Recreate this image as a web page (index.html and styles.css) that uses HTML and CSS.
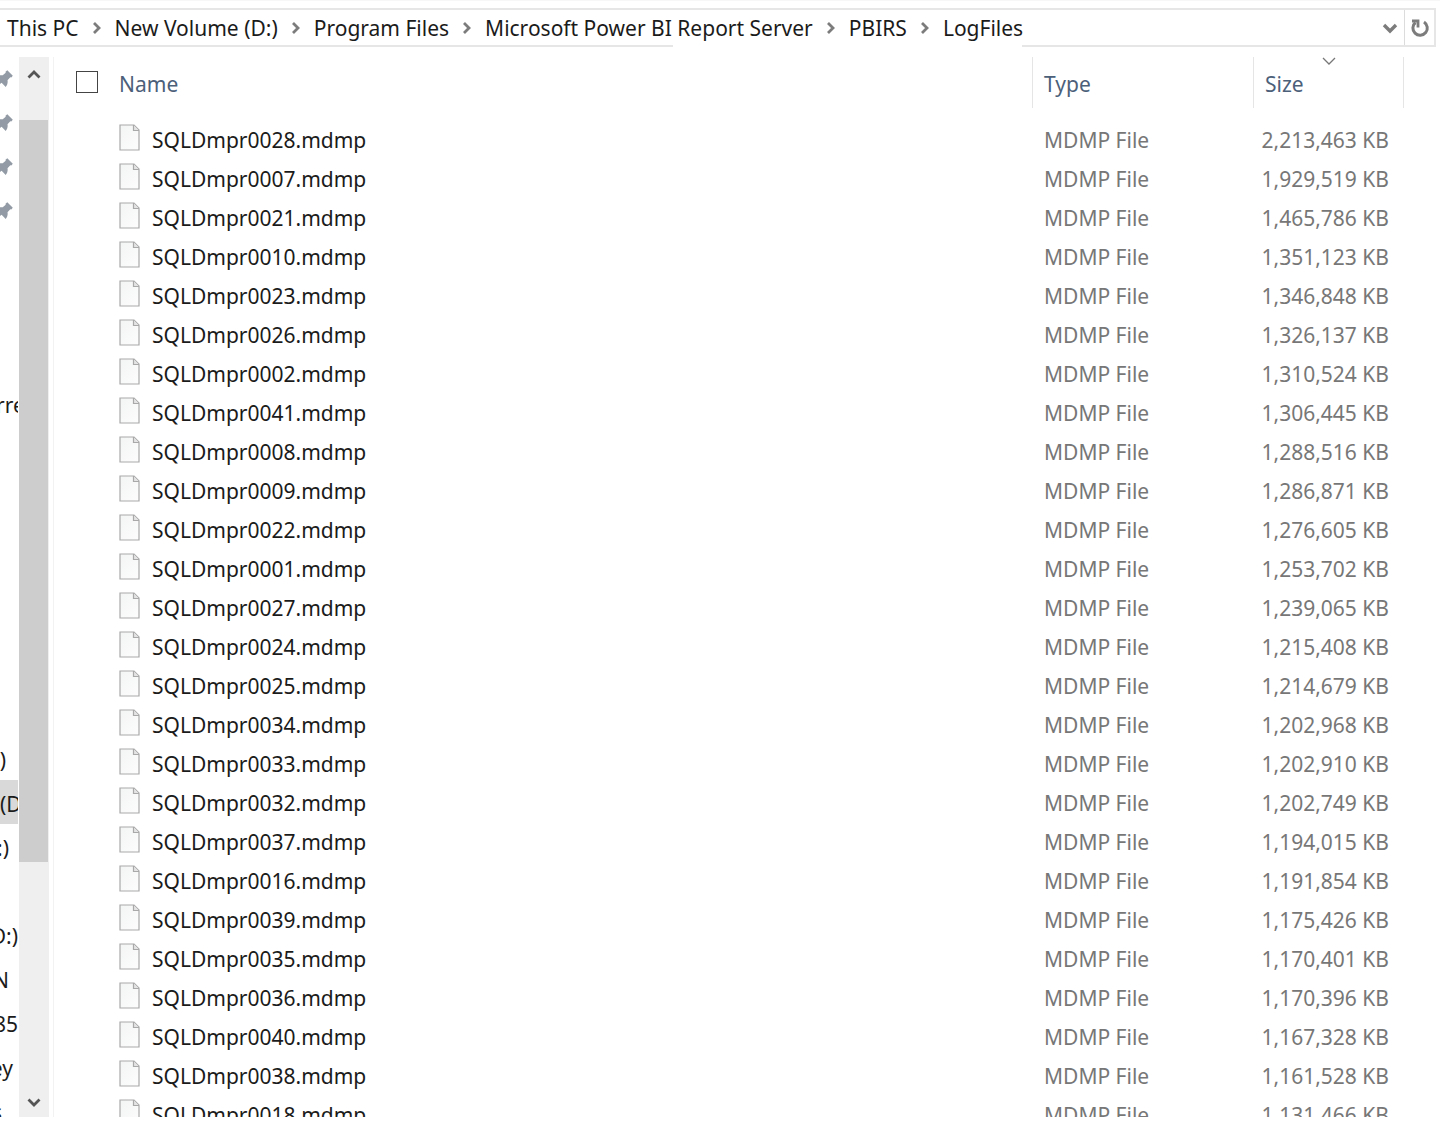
FILE: index.html
```html
<!DOCTYPE html>
<html lang="en">
<head>
  <meta charset="UTF-8">
  <title>LogFiles</title>
  <link rel="stylesheet" href="styles.css">
</head>
<body>

  <!-- shared icons -->
  <svg class="icons" width="0" height="0">
    <defs>
      <linearGradient id="paper" x1="0" y1="0" x2="1" y2="1">
        <stop offset="0" stop-color="#f3f4f4"/>
        <stop offset="1" stop-color="#fdfdfd"/>
      </linearGradient>
    </defs>
    <symbol id="file" viewBox="0 0 21 27">
      <path d="M1 1H15L20 6V26H1Z" fill="url(#paper)" stroke="#a9a9a9" stroke-width="1.2"/>
      <path d="M14.5 1V6.5H20" fill="#e4e4e4" stroke="#a9a9a9" stroke-width="1.2"/>
    </symbol>
    <symbol id="pin" viewBox="0 0 18 18">
      <path d="M12.3 .3L17.8 5.8L16.3 7.6L15.3 7.3L12.5 10.3C13 12.500 12.400 15 10.700 17L6.600 12.700L1.500 16.700L1 16.200L5 11L1 7C3 5.300 5.400 4.900 7.700 5.300L10.700 2.800L10.500 1.800Z" fill="#929ba5"/>
    </symbol>
    <symbol id="next" viewBox="0 0 10 12">
      <path d="M2 1L7 6L2 11" fill="none" stroke="#7c7c7c" stroke-width="2.8"/>
    </symbol>
  </svg>

  <div class="address-bar">
    <nav class="crumbs">
      <a href="#">This PC</a>
      <svg class="next"><use href="#next"/></svg>
      <a href="#">New Volume (D:)</a>
      <svg class="next"><use href="#next"/></svg>
      <a href="#">Program Files</a>
      <svg class="next"><use href="#next"/></svg>
      <a href="#">Microsoft Power BI Report Server</a>
      <svg class="next"><use href="#next"/></svg>
      <a href="#">PBIRS</a>
      <svg class="next"><use href="#next"/></svg>
      <a href="#">LogFiles</a>
    </nav>
    <button class="history" aria-label="Previous locations">
      <svg width="16" height="12" viewBox="0 0 16 12"><path d="M2 3L8 9L14 3" fill="none" stroke="#7c7c7c" stroke-width="3.4"/></svg>
    </button>
    <button class="refresh" aria-label="Refresh">
      <svg width="20" height="20" viewBox="0 0 20 20">
        <path d="M14 4A7.200 7.200 0 1 1 5.500 4.500" fill="none" stroke="#7c7c7c" stroke-width="3"/>
        <path d="M2 3H8V9.500" fill="none" stroke="#7c7c7c" stroke-width="2.8"/>
      </svg>
    </button>
  </div>

  <div class="explorer">
    <aside class="sidebar">
      <ul class="pinned">
        <li><svg class="pin"><use href="#pin"/></svg></li>
        <li><svg class="pin"><use href="#pin"/></svg></li>
        <li><svg class="pin"><use href="#pin"/></svg></li>
        <li><svg class="pin"><use href="#pin"/></svg></li>
      </ul>
      <ul class="folders">
        <li>rre</li>
      </ul>
      <ul class="drives">
        <li class="short">)</li>
        <li class="selected">(D</li>
        <li class="mid">:)</li>
      </ul>
      <ul class="network">
        <li>D:)</li>
        <li class="mid">N</li>
        <li>85</li>
        <li class="near">ey</li>
        <li class="edge">s</li>
      </ul>
    </aside>

    <div class="scrollbar">
      <button class="scroll-btn" aria-label="Scroll up">
        <svg width="14" height="12" viewBox="0 0 14 12"><path d="M1.5 9.5L7 4L12.5 9.5" fill="none" stroke="#555" stroke-width="2.8"/></svg>
      </button>
      <div class="track"><div class="thumb"></div></div>
      <button class="scroll-btn down" aria-label="Scroll down">
        <svg width="14" height="12" viewBox="0 0 14 12"><path d="M1.5 2.5L7 8L12.5 2.5" fill="none" stroke="#555" stroke-width="2.8"/></svg>
      </button>
    </div>

    <main class="files">
      <table>
        <thead>
          <tr>
            <th class="name"><div class="head"><input type="checkbox" aria-label="Select all">Name</div></th>
            <th class="type"><div class="head">Type</div></th>
            <th class="size"><div class="head">Size
              <svg class="sort" width="14" height="8" viewBox="0 0 14 8"><path d="M1 1L7 7L13 1" fill="none" stroke="#777" stroke-width="1.3"/></svg>
            </div></th>
          </tr>
        </thead>
        <tbody>
          <tr><td><svg class="file"><use href="#file"/></svg>SQLDmpr0028.mdmp</td><td>MDMP File</td><td>2,213,463 KB</td></tr>
          <tr><td><svg class="file"><use href="#file"/></svg>SQLDmpr0007.mdmp</td><td>MDMP File</td><td>1,929,519 KB</td></tr>
          <tr><td><svg class="file"><use href="#file"/></svg>SQLDmpr0021.mdmp</td><td>MDMP File</td><td>1,465,786 KB</td></tr>
          <tr><td><svg class="file"><use href="#file"/></svg>SQLDmpr0010.mdmp</td><td>MDMP File</td><td>1,351,123 KB</td></tr>
          <tr><td><svg class="file"><use href="#file"/></svg>SQLDmpr0023.mdmp</td><td>MDMP File</td><td>1,346,848 KB</td></tr>
          <tr><td><svg class="file"><use href="#file"/></svg>SQLDmpr0026.mdmp</td><td>MDMP File</td><td>1,326,137 KB</td></tr>
          <tr><td><svg class="file"><use href="#file"/></svg>SQLDmpr0002.mdmp</td><td>MDMP File</td><td>1,310,524 KB</td></tr>
          <tr><td><svg class="file"><use href="#file"/></svg>SQLDmpr0041.mdmp</td><td>MDMP File</td><td>1,306,445 KB</td></tr>
          <tr><td><svg class="file"><use href="#file"/></svg>SQLDmpr0008.mdmp</td><td>MDMP File</td><td>1,288,516 KB</td></tr>
          <tr><td><svg class="file"><use href="#file"/></svg>SQLDmpr0009.mdmp</td><td>MDMP File</td><td>1,286,871 KB</td></tr>
          <tr><td><svg class="file"><use href="#file"/></svg>SQLDmpr0022.mdmp</td><td>MDMP File</td><td>1,276,605 KB</td></tr>
          <tr><td><svg class="file"><use href="#file"/></svg>SQLDmpr0001.mdmp</td><td>MDMP File</td><td>1,253,702 KB</td></tr>
          <tr><td><svg class="file"><use href="#file"/></svg>SQLDmpr0027.mdmp</td><td>MDMP File</td><td>1,239,065 KB</td></tr>
          <tr><td><svg class="file"><use href="#file"/></svg>SQLDmpr0024.mdmp</td><td>MDMP File</td><td>1,215,408 KB</td></tr>
          <tr><td><svg class="file"><use href="#file"/></svg>SQLDmpr0025.mdmp</td><td>MDMP File</td><td>1,214,679 KB</td></tr>
          <tr><td><svg class="file"><use href="#file"/></svg>SQLDmpr0034.mdmp</td><td>MDMP File</td><td>1,202,968 KB</td></tr>
          <tr><td><svg class="file"><use href="#file"/></svg>SQLDmpr0033.mdmp</td><td>MDMP File</td><td>1,202,910 KB</td></tr>
          <tr><td><svg class="file"><use href="#file"/></svg>SQLDmpr0032.mdmp</td><td>MDMP File</td><td>1,202,749 KB</td></tr>
          <tr><td><svg class="file"><use href="#file"/></svg>SQLDmpr0037.mdmp</td><td>MDMP File</td><td>1,194,015 KB</td></tr>
          <tr><td><svg class="file"><use href="#file"/></svg>SQLDmpr0016.mdmp</td><td>MDMP File</td><td>1,191,854 KB</td></tr>
          <tr><td><svg class="file"><use href="#file"/></svg>SQLDmpr0039.mdmp</td><td>MDMP File</td><td>1,175,426 KB</td></tr>
          <tr><td><svg class="file"><use href="#file"/></svg>SQLDmpr0035.mdmp</td><td>MDMP File</td><td>1,170,401 KB</td></tr>
          <tr><td><svg class="file"><use href="#file"/></svg>SQLDmpr0036.mdmp</td><td>MDMP File</td><td>1,170,396 KB</td></tr>
          <tr><td><svg class="file"><use href="#file"/></svg>SQLDmpr0040.mdmp</td><td>MDMP File</td><td>1,167,328 KB</td></tr>
          <tr><td><svg class="file"><use href="#file"/></svg>SQLDmpr0038.mdmp</td><td>MDMP File</td><td>1,161,528 KB</td></tr>
          <tr><td><svg class="file"><use href="#file"/></svg>SQLDmpr0018.mdmp</td><td>MDMP File</td><td>1,131,466 KB</td></tr>
        </tbody>
      </table>
    </main>
  </div>

</body>
</html>
```
FILE: styles.css
```css
* {
  box-sizing: border-box;
}

body {
  margin: 0;
  height: 100vh;
  padding: 7px 0 8px;
  display: flex;
  flex-direction: column;
  overflow: hidden;
  background-color: #fff;
  border-top: 1px solid #f7f7f7;
  font-family: "Noto Sans", "Open Sans", sans-serif;
  font-size: 21px;
  line-height: 30px;
  color: #1b1b1b;
}

.icons {
  position: absolute;
}

button {
  padding: 0;
  border: none;
  background: none;
  display: flex;
  align-items: center;
  justify-content: center;
}

ul {
  list-style: none;
  margin: 0;
  padding: 0;
}

/* address bar */
.address-bar {
  position: relative;
  display: flex;
  height: 39px;
  flex-shrink: 0;
  margin-right: 4px;
  border: 2px solid #e6e6e6;
  border-left: none;
}

/* open part of the lower border */
.address-bar::after {
  content: "";
  position: absolute;
  left: 673px;
  bottom: -2px;
  width: 349px;
  height: 2px;
  background-color: #fff;
}

.crumbs {
  flex: 1;
  display: flex;
  align-items: center;
  gap: 13px;
  padding-left: 7px;
  white-space: nowrap;
}

.crumbs a {
  color: #1b1b1b;
  text-decoration: none;
}

.next {
  width: 10px;
  height: 12px;
  flex-shrink: 0;
}

.history {
  width: 28px;
}

.refresh {
  width: 30px;
  border-left: 1px solid #dcdcdc;
}

/* lower part of the window */
.explorer {
  flex: 1;
  display: flex;
  min-height: 0;
  margin-top: 10px;
  overflow: hidden;
}

.sidebar {
  width: 18px;
  margin-right: 1px;
  flex-shrink: 0;
  overflow: hidden;
}

.sidebar li {
  height: 44px;
  display: flex;
  align-items: center;
  justify-content: flex-end;
}

.sidebar .folders li {
  justify-content: flex-start;
  margin-left: -4px;
}

.sidebar .short {
  padding-right: 12px;
}

.sidebar .mid {
  padding-right: 9px;
}

.sidebar .near {
  padding-right: 5px;
}

.sidebar .edge {
  padding-right: 16px;
}

.sidebar .drives li {
  padding-top: 3px;
}

.sidebar .selected {
  justify-content: flex-start;
  background-color: #d9d9d9;
}

.pin {
  width: 18px;
  height: 18px;
  flex-shrink: 0;
  margin-right: 5px;
}

.folders {
  margin-top: 150px;
}

.drives {
  margin-top: 309px;
}

.network {
  margin-top: 46px;
}

.scrollbar {
  width: 30px;
  flex-shrink: 0;
  display: flex;
  flex-direction: column;
  background-color: #efefef;
}

.scroll-btn {
  height: 34px;
  flex-shrink: 0;
}

.scroll-btn.down {
  padding-top: 6px;
}

.track {
  flex: 1;
  padding: 29px 1px 0 0;
}

.thumb {
  height: 77%;
  background-color: #cdcdcd;
}

/* file list */
.files {
  flex: 1;
  min-width: 0;
  margin-left: 4px;
  padding-right: 36px;
  border-left: 1px solid #f2f2f2;
  overflow: hidden;
}

table {
  width: 100%;
  table-layout: fixed;
  border-collapse: collapse;
}

th {
  height: 62px;
  padding: 0;
  vertical-align: top;
  font-weight: normal;
  text-align: left;
  color: #4c607a;
}

.type {
  width: 221px;
}

.size {
  width: 150px;
}

.head {
  position: relative;
  display: flex;
  align-items: center;
  height: 51px;
  padding: 2px 0 0 11px;
  border-right: 1px solid #e5e5e5;
}

.name .head {
  padding-left: 22px;
}

.head input {
  appearance: none;
  width: 22px;
  height: 22px;
  margin: 0 21px 4px 0;
  border: 1px solid #444;
  background-color: #fff;
}

.sort {
  position: absolute;
  top: 0;
  left: calc(50% - 7px);
}

td {
  height: 39px;
  padding: 2px 0 0 11px;
  white-space: nowrap;
  color: #777;
}

td:first-child {
  padding: 4px 0 0 65px;
  color: #1b1b1b;
}

td:last-child {
  padding: 2px 15px 0 0;
  text-align: right;
}

.file {
  width: 21px;
  height: 27px;
  margin: -5px 12px 5px 0;
  vertical-align: middle;
}
```
